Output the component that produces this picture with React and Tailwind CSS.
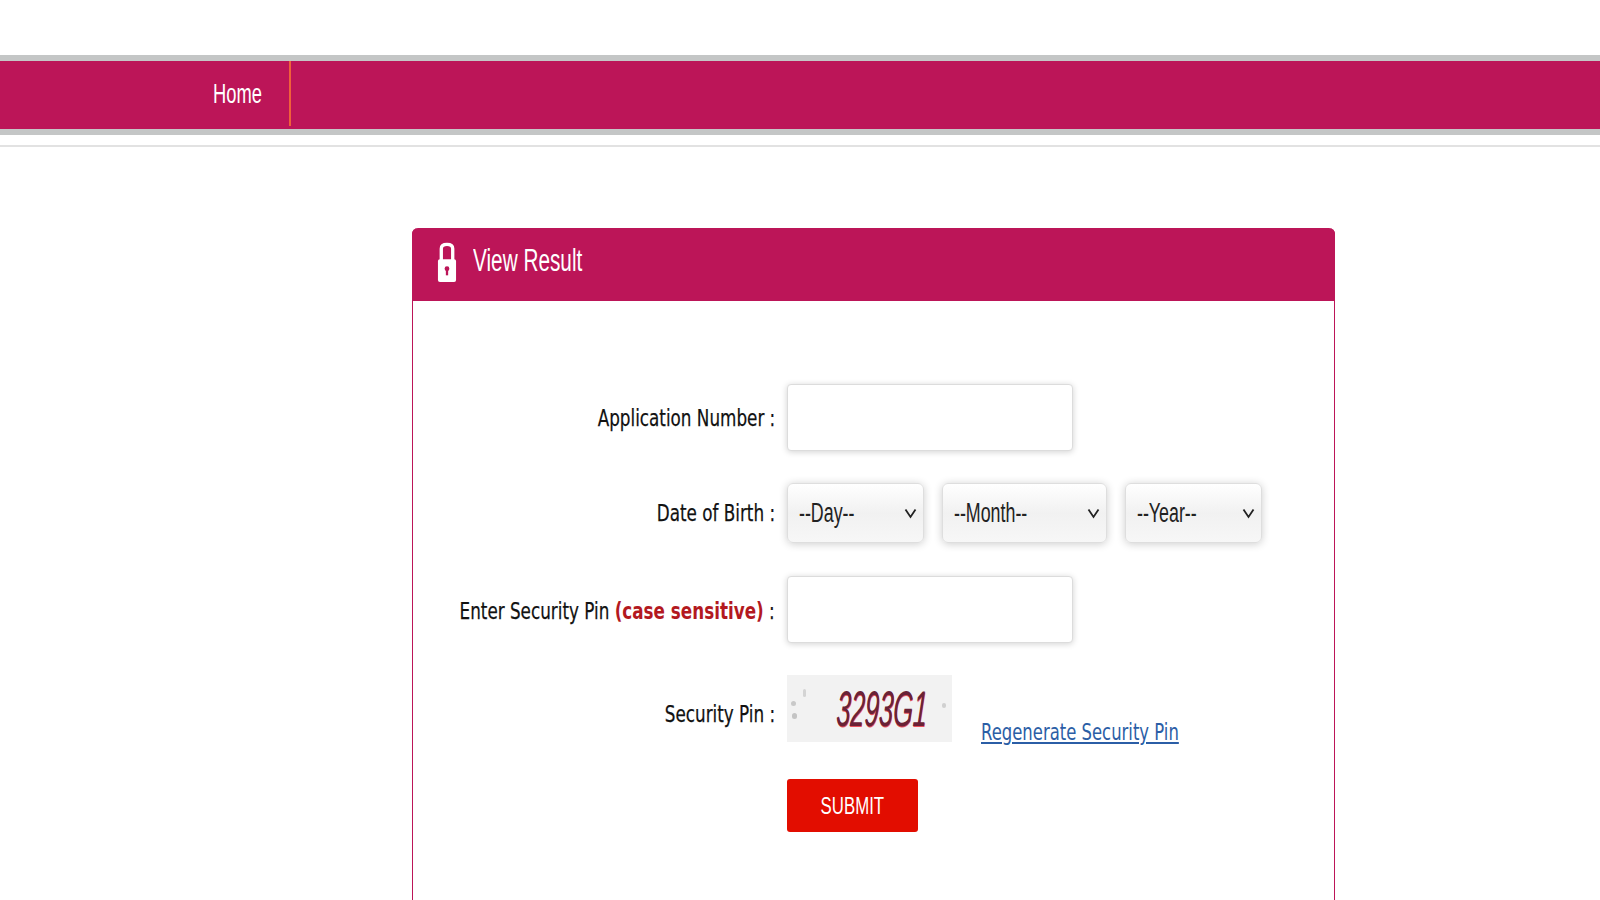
import React from 'react';

const labelFont = "font-['DejaVu_Sans',sans-serif]";
const arialFont = "font-['Liberation_Sans',Arial,sans-serif]";

const FormRow = ({ label, className = '', labelClass = '', children }) => (
  <div className={`flex items-center ${className}`}>
    <div className="w-[362px] shrink-0 flex justify-end">
      <span className={`inline-block origin-right scale-x-[.73] whitespace-nowrap text-[23px] leading-none text-[#111] [-webkit-text-stroke:0.25px_#111] ${labelFont} ${labelClass}`}>
        {label}
      </span>
    </div>
    <div className="ml-3 flex items-center">{children}</div>
  </div>
);

const TextBox = () => (
  <input
    type="text"
    className="block w-[286px] h-[67px] bg-white border border-[#dcdcdc] rounded shadow-[0_1px_6px_rgba(0,0,0,0.18)] outline-none"
  />
);

const DateSelect = ({ text, width }) => (
  <button
    type="button"
    className={`relative flex items-center h-[60px] pl-[11px] ${width} rounded-md border border-[#dedede] bg-gradient-to-b from-white via-[#f1f1f1] to-[#f7f7f7] shadow-[0_1px_8px_rgba(0,0,0,0.2)]`}
  >
    <span className={`inline-block origin-left scale-x-[.66] whitespace-nowrap text-[27px] leading-none text-[#222] ${arialFont}`}>
      {text}
    </span>
    <svg className="absolute right-1.5 top-1/2 -translate-y-1/2" width="13" height="16" viewBox="0 0 13 16" fill="none">
      <path d="M1.500 4.500 L6.500 12 L11.500 4.500" stroke="#222" strokeWidth="1.800" />
    </svg>
  </button>
);

const LockIcon = () => (
  <svg width="20" height="40" viewBox="0 0 20 42" className="shrink-0">
    <path d="M4 20 V7 Q4 2.500 10 2.500 Q16 2.500 16 7 V20" fill="none" stroke="#fff" strokeWidth="3.500" />
    <rect x="0.500" y="18" width="19" height="24" rx="2" fill="#fff" />
    <circle cx="10" cy="28" r="2.500" fill="#bc1558" />
    <rect x="8.800" y="28" width="2.400" height="7" fill="#bc1558" />
  </svg>
);

const Captcha = () => (
  <div className="relative flex items-center justify-center w-[165px] h-[67px] bg-[#f2f2f2] overflow-hidden">
    <span className="absolute left-[4px] top-[26px] w-[5px] h-[5px] rounded-full bg-[#c9c9c9]" />
    <span className="absolute left-[5px] top-[38px] w-[5px] h-[6px] rounded-full bg-[#c4c4c4]" />
    <span className="absolute left-[16px] top-[14px] w-[3px] h-[8px] rounded-full bg-[#d4d4d4]" />
    <span className="absolute right-[6px] top-[28px] w-[4px] h-[5px] rounded-full bg-[#d0d0d0]" />
    <span className="ml-6 inline-block scale-x-[.51] -skew-x-6 text-[50px] leading-none italic text-[#6a2236] [text-shadow:1px_1px_0_#e8505c] font-['Liberation_Sans',sans-serif]">
      3293G1
    </span>
  </div>
);

export default function App() {
  return (
    <div className="h-[900px] overflow-hidden bg-white">
      <div className="h-[55px]" />
      <div className="border-y-[6px] border-[#c4c6c6] bg-[#bc1558] h-[80px]">
        <div className="flex h-[65px]">
          <div className="flex items-center w-[291px] pl-[213px] border-r-2 border-[#f0603a]">
            <span className={`mt-0.5 inline-block origin-left scale-x-[.68] text-[27px] leading-none text-white ${arialFont}`}>Home</span>
          </div>
        </div>
      </div>
      <div className="mt-2.5 h-0.5 bg-[#e2e2e2]" />

      <div className="mt-[81px] ml-[412px] w-[923px] h-[700px] rounded-t-md border-x border-[#bc1558]">
        <div className="-mx-px flex items-center gap-4 h-[73px] pl-[25px] pb-[5px] rounded-t-md bg-[#bc1558]">
          <LockIcon />
          <span className={`mb-1 inline-block origin-left scale-x-[.67] text-[31px] leading-none text-white ${arialFont}`}>View Result</span>
        </div>

        <div className="pt-[83px]">
          <FormRow label="Application Number :" labelClass="mt-0.5 scale-x-[.72]">
            <TextBox />
          </FormRow>

          <FormRow label="Date of Birth :" className="mt-[32px]">
            <div className="flex gap-[18px]">
              <DateSelect text="--Day--" width="w-[137px]" />
              <DateSelect text="--Month--" width="w-[165px]" />
              <DateSelect text="--Year--" width="w-[137px]" />
            </div>
          </FormRow>

          <FormRow
            label={<>Enter Security Pin <b className="text-[#b3191f] [-webkit-text-stroke:0]">(case sensitive)</b> :</>}
            labelClass="mt-1"
            className="mt-[33px]"
          >
            <TextBox />
          </FormRow>

          <FormRow label="Security Pin :" labelClass="mt-3" className="mt-[32px]">
            <Captcha />
            <a href="#" className="ml-[29px] self-end -mb-[4px] w-[200px] whitespace-nowrap">
              <span className={`inline-block origin-left scale-x-[.715] text-[23px] leading-none text-[#2b5ea6] underline ${labelFont}`}>
                Regenerate Security Pin
              </span>
            </a>
          </FormRow>

          <div className="mt-[37px] ml-[374px]">
            <button
              type="button"
              className="flex items-center justify-center w-[131px] h-[53px] rounded-[3px] bg-[#e20d00]"
            >
              <span className={`inline-block scale-x-[.7] text-[24px] leading-none text-white ${arialFont}`}>SUBMIT</span>
            </button>
          </div>
        </div>
      </div>
    </div>
  );
}
